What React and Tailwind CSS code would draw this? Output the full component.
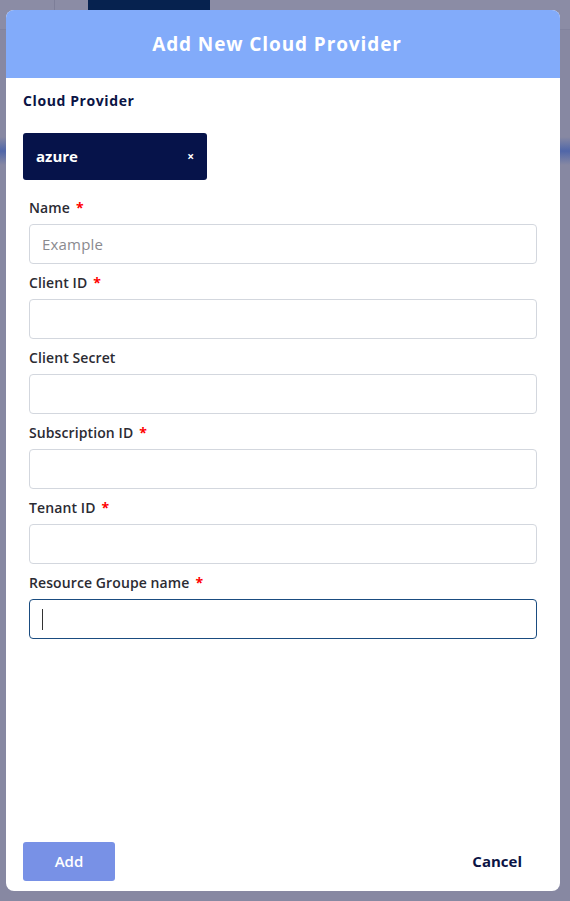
import React from 'react';

const FIELDS = [
  { label: 'Name', required: true, placeholder: 'Example' },
  { label: 'Client ID', required: true },
  { label: 'Client Secret', required: false },
  { label: 'Subscription ID', required: true },
  { label: 'Tenant ID', required: true },
  { label: 'Resource Groupe name', required: true, focused: true },
];

function Field({ label, required, placeholder, focused }) {
  return (
    <div className="flex flex-col">
      <label className="h-5 mt-[9px] mb-[6px] text-[14px] leading-5 font-semibold tracking-[0.1px] text-[#2b2b33]">
        {label}
        {required && <span className="ml-[6px] text-[#ff0000] font-bold">*</span>}
      </label>
      <div
        className={`h-10 rounded-[4px] bg-white flex items-center px-3 text-[15px] ${
          focused ? 'border border-[#1a4c80]' : 'border border-[#d3d7de]'
        }`}
      >
        {placeholder && <span className="text-[#8a8a8f] tracking-[0.2px]">{placeholder}</span>}
        {focused && <span className="w-px h-[21px] bg-[#333]" />}
      </div>
    </div>
  );
}

export default function App() {
  return (
    <div className="relative w-full h-[901px] overflow-hidden bg-[#8788a2] font-['Open_Sans',sans-serif]">
      {/* dimmed page behind the modal */}
      <div className="h-[30px] bg-[#8b8ca5] border-b border-[#82839d] flex">
        <div className="w-[55px] border-r border-[#7d7e98]" />
        <div className="ml-[33px] w-[122px] h-[10px] bg-[#06224f]" />
      </div>
      <div className="mt-[107px] h-[28px] bg-gradient-to-b from-[#8788a2] via-[#5066a8] to-[#8788a2]" />

      {/* modal */}
      <div className="absolute inset-0 pt-[10px] pl-[6px] pr-[10px] pb-[10px]">
        <div className="h-full bg-white rounded-[8px] overflow-hidden flex flex-col">
          <div className="h-[68px] bg-[#82abfa] flex items-center justify-center pr-[12px]">
            <h2 className="text-white text-[19px] font-bold tracking-[0.9px]">Add New Cloud Provider</h2>
          </div>

          <div className="flex-1 flex flex-col">
            <div className="pl-[17px] pt-[13px]">
              <div className="h-5 text-[14px] leading-5 font-bold tracking-[0.6px] text-[#0b1445]">Cloud Provider</div>
              <div className="mt-[22px] w-[184px] h-[47px] rounded-[3px] bg-[#06134a] flex items-center justify-between pl-[13px] pr-[13px]">
                <span className="text-white text-[15px] font-bold">azure</span>
                <span className="text-white text-[12px] font-bold leading-none">×</span>
              </div>
            </div>

            <div className="pl-[23px] pr-[23px] pt-[9px] flex flex-col">
              {FIELDS.map((f) => (
                <Field key={f.label} {...f} />
              ))}
            </div>
          </div>

          <div className="flex items-center justify-between pl-[17px] pr-[22px] pb-[10px]">
            <button className="w-[92px] h-[39px] rounded-[3px] bg-[#7891e6] text-white text-[15px] font-semibold">
              Add
            </button>
            <button className="px-4 h-[39px] text-[#0b1445] text-[15px] font-bold">Cancel</button>
          </div>
        </div>
      </div>
    </div>
  );
}
